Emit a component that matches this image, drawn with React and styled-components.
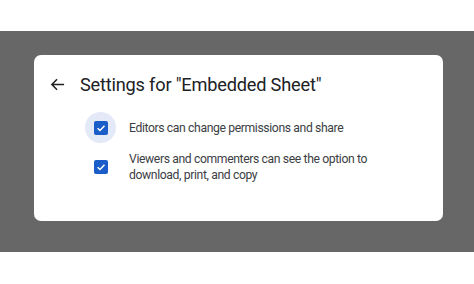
import React from 'react'
import styled, { createGlobalStyle } from 'styled-components'

const GlobalStyle = createGlobalStyle`
  html, body {
    margin: 0;
    padding: 0;
    background: #ffffff;
    font-family: Roboto, "Liberation Sans", sans-serif;
  }
`

const Page = styled.div`
  width: 474px;
  height: 284px;
  padding-top: 31px;
  box-sizing: border-box;
  background: #ffffff;
`

const Backdrop = styled.div`
  height: 221px;
  background: #676767;
  padding: 24px 31px 0 34px;
  box-sizing: border-box;
`

const Dialog = styled.div`
  width: 409px;
  height: 166px;
  background: #ffffff;
  border-radius: 7px;
  box-sizing: border-box;
  padding: 17px 0 0 15px;
`

const Header = styled.div`
  display: flex;
  align-items: center;
  gap: 15px;
  height: 24px;
`

const BackButton = styled.div`
  width: 16px;
  height: 16px;
  display: flex;
  align-items: center;
  justify-content: center;
  color: #202124;
`

const Title = styled.h1`
  margin: 0;
  font-size: 18.2px;
  font-weight: 400;
  color: #202124;
  letter-spacing: -0.2px;
`

const Options = styled.div`
  display: flex;
  flex-direction: column;
  gap: 8px;
  margin-top: 16px;
  padding-left: 36px;
`

const Option = styled.label`
  display: flex;
  align-items: center;
  gap: 13px;
`

const Halo = styled.div`
  width: 31px;
  height: 31px;
  border-radius: 50%;
  flex-shrink: 0;
  display: flex;
  align-items: center;
  justify-content: center;
  background: ${p => (p.$focused ? '#e3e9f6' : 'transparent')};
`

const Box = styled.div`
  width: 14px;
  height: 14px;
  border-radius: 2px;
  background: #1a5dc9;
  display: flex;
  align-items: center;
  justify-content: center;
`

const Label = styled.span`
  font-size: 12.2px;
  line-height: 16px;
  letter-spacing: -0.38px;
  color: #3c4043;
  max-width: 245px;
`

const Check = () => (
  <svg width="10" height="10" viewBox="0 0 10 10">
    <path d="M1.6 5.2 L4 7.5 L8.5 2.8" fill="none" stroke="#fff" strokeWidth="1.5" />
  </svg>
)

const Checkbox = ({ focused }) => (
  <Halo $focused={focused}>
    <Box>
      <Check />
    </Box>
  </Halo>
)

export default function App() {
  return (
    <>
      <GlobalStyle />
      <Page>
        <Backdrop>
          <Dialog>
            <Header>
              <BackButton>
                <svg width="15" height="15" viewBox="0 0 16 16">
                  <path d="M15 8 H2 M7.5 2.5 L2 8 L7.5 13.5" fill="none" stroke="#202124" strokeWidth="1.6" />
                </svg>
              </BackButton>
              <Title>Settings for "Embedded Sheet"</Title>
            </Header>
            <Options>
              <Option>
                <Checkbox focused />
                <Label>Editors can change permissions and share</Label>
              </Option>
              <Option>
                <Checkbox />
                <Label>Viewers and commenters can see the option to download, print, and copy</Label>
              </Option>
            </Options>
          </Dialog>
        </Backdrop>
      </Page>
    </>
  )
}
